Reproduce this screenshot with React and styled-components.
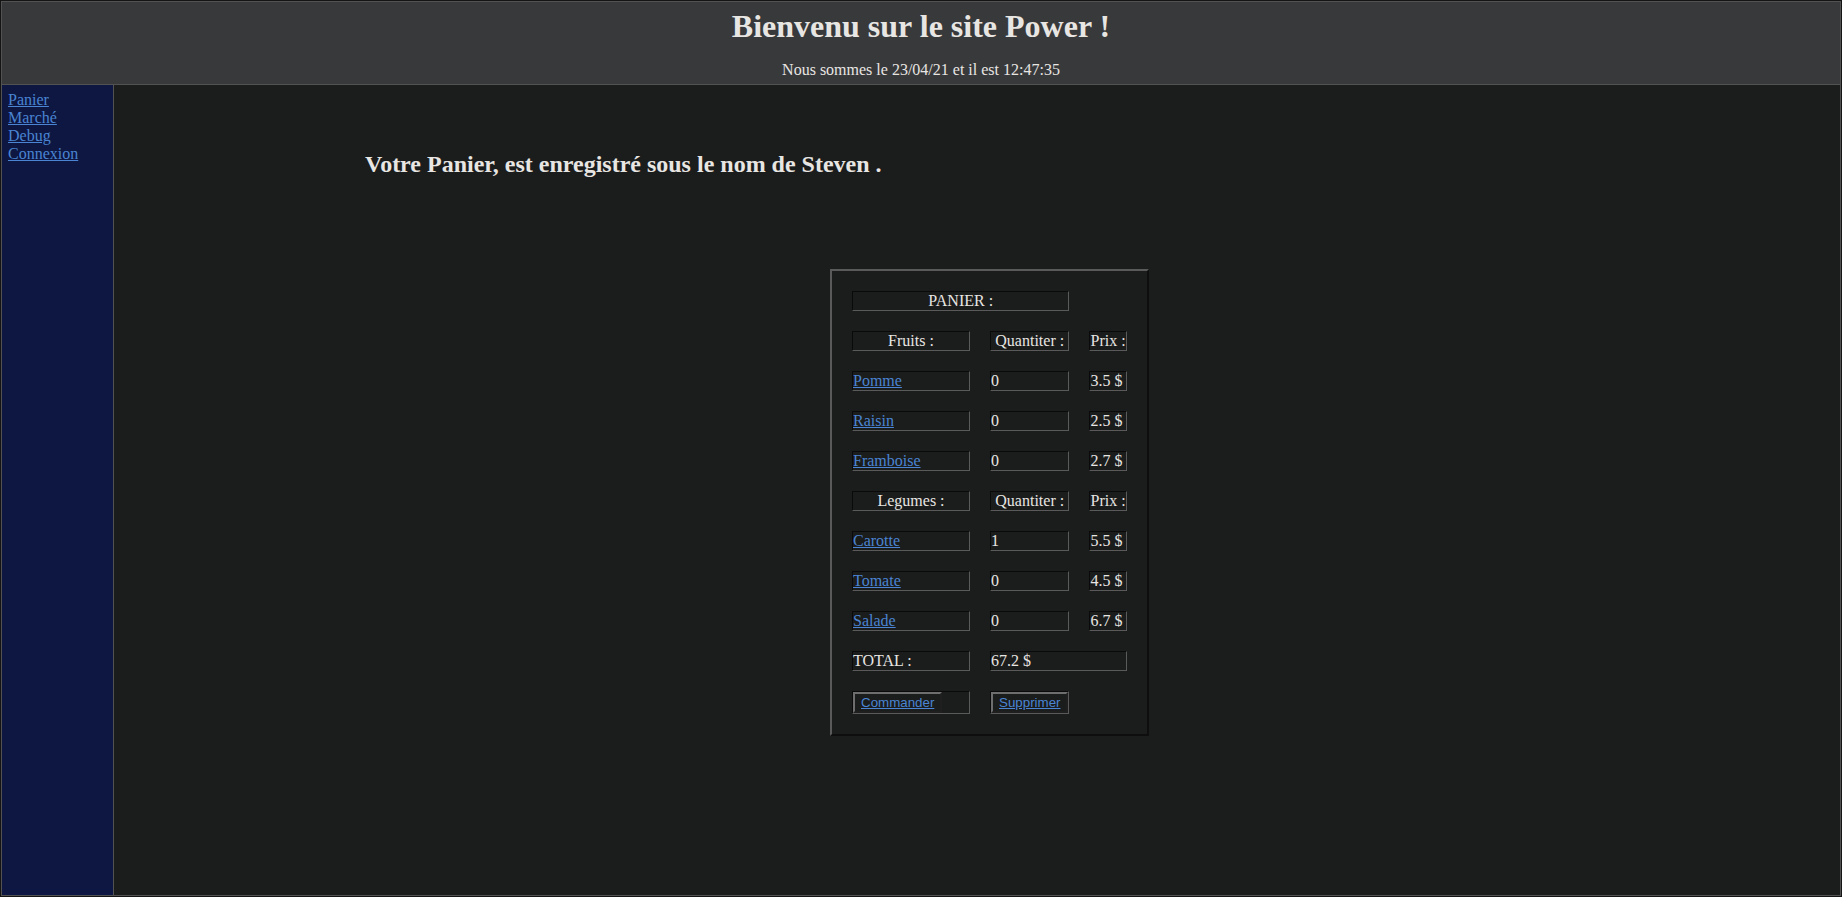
import React from "react";
import styled, { createGlobalStyle } from "styled-components";

const GlobalStyle = createGlobalStyle`
  html, body {
    margin: 0;
    padding: 0;
    background: #141414;
  }
  body {
    font-family: "Liberation Serif", "Times New Roman", serif;
    color: #e8e6e3;
  }
`;

const fruits = [
  { name: "Pomme", qty: 0, price: "3.5 $" },
  { name: "Raisin", qty: 0, price: "2.5 $" },
  { name: "Framboise", qty: 0, price: "2.7 $" },
];

const legumes = [
  { name: "Carotte", qty: 1, price: "5.5 $" },
  { name: "Tomate", qty: 0, price: "4.5 $" },
  { name: "Salade", qty: 0, price: "6.7 $" },
];

const ProductRows = ({ items }) =>
  items.map((item) => (
    <tr key={item.name}>
      <Cell>
        <Link href="#">{item.name}</Link>
      </Cell>
      <Cell>{item.qty}</Cell>
      <Cell>{item.price}</Cell>
    </tr>
  ));

const App = () => {
  return (
    <>
      <GlobalStyle />
      <Shell>
        <Header>
          <Title>Bienvenu sur le site Power !</Title>
          <Subtitle>Nous sommes le 23/04/21 et il est 12:47:35</Subtitle>
        </Header>
        <Sidebar>
          <NavLink href="#">Panier</NavLink>
          <NavLink href="#">Marché</NavLink>
          <NavLink href="#">Debug</NavLink>
          <NavLink href="#">Connexion</NavLink>
        </Sidebar>
        <Main>
          <Heading>Votre Panier, est enregistré sous le nom de Steven .</Heading>
          <Basket>
            <tbody>
              <tr>
                <Cell colSpan={2} head>
                  PANIER :
                </Cell>
              </tr>
              <tr>
                <Cell head>Fruits :</Cell>
                <Cell head>Quantiter :</Cell>
                <Cell head>Prix :</Cell>
              </tr>
              <ProductRows items={fruits} />
              <tr>
                <Cell head>Legumes :</Cell>
                <Cell head>Quantiter :</Cell>
                <Cell head>Prix :</Cell>
              </tr>
              <ProductRows items={legumes} />
              <tr>
                <Cell>TOTAL :</Cell>
                <Cell colSpan={2}>67.2 $</Cell>
              </tr>
              <tr>
                <Cell>
                  <Button>
                    <Link href="#">Commander</Link>
                  </Button>
                </Cell>
                <Cell>
                  <Button>
                    <Link href="#">Supprimer</Link>
                  </Button>
                </Cell>
              </tr>
            </tbody>
          </Basket>
        </Main>
      </Shell>
    </>
  );
};

const Shell = styled.div`
  box-sizing: border-box;
  height: 100vh;
  padding: 1px;
  display: grid;
  grid-template-columns: 113px 1fr;
  grid-template-rows: 84px 1fr;
  background: #141414;
`;

const Header = styled.header`
  grid-column: 1 / -1;
  box-sizing: border-box;
  background: #38393b;
  border: 1px solid #525252;
  text-align: center;
`;

const Title = styled.h1`
  margin: 6px 0 17px;
  font-size: 32px;
  line-height: 36px;
  font-weight: bold;
`;

const Subtitle = styled.p`
  margin: 0;
  font-size: 16px;
  line-height: 18px;
`;

const Sidebar = styled.nav`
  box-sizing: border-box;
  background: #0d1742;
  border: 1px solid #525252;
  border-top: none;
  padding: 6px 6px;
  display: flex;
  flex-direction: column;
  align-items: flex-start;
`;

const NavLink = styled.a`
  display: block;
  font-size: 16px;
  line-height: 18px;
  color: #4a84d2;
  text-decoration: underline;
`;

const Main = styled.main`
  box-sizing: border-box;
  background: #1b1c1c;
  border: 1px solid #525252;
  border-top: none;
  border-left: none;
  overflow: hidden;
`;

const Heading = styled.h2`
  margin: 65px 0 0 251px;
  font-size: 24px;
  line-height: 28px;
  font-weight: bold;
`;

const Basket = styled.table`
  margin: 91px 0 0 716px;
  border-collapse: separate;
  border-spacing: 20px;
  border: 2px solid;
  border-color: #5a5a5a #0e0e0e #0e0e0e #5a5a5a;
  font-size: 16px;
  line-height: 18px;
`;

const Cell = styled.td`
  padding: 0;
  border: 1px solid;
  border-color: #0a0a0a #5a5a5a #5a5a5a #0a0a0a;
  text-align: ${(props) => (props.head ? "center" : "left")};
  white-space: nowrap;
  vertical-align: middle;
  &:first-child {
    width: 116px;
  }
`;

const Link = styled.a`
  color: #4a84d2;
  text-decoration: underline;
`;

const Button = styled.button`
  display: block;
  margin: 0;
  padding: 1px 6px;
  background: #1b1c1c;
  border: 2px solid;
  border-color: #6e6e6e #1f1f1f #1f1f1f #6e6e6e;
  font-family: "Liberation Sans", Arial, sans-serif;
  font-size: 13.333px;
  line-height: 15px;
  cursor: pointer;
`;

export default App;
